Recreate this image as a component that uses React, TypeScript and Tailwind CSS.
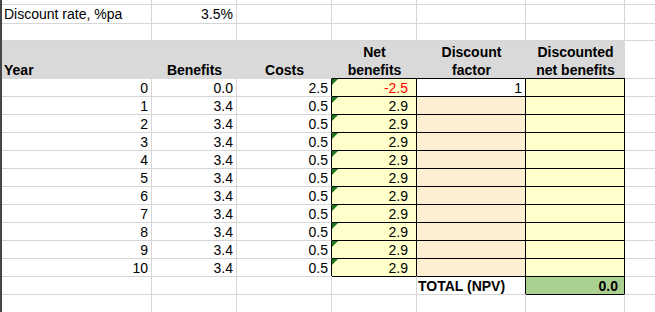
import React from "react";

const GRID = "grid grid-cols-[150px_85px_95px_85px_109px_99px_1fr]";
const G = "border-[#d6d6d6]";

type C = { cls: string; text?: React.ReactNode; tri?: boolean };

function Row({ h, cells }: { h: string; cells: C[] }) {
  return (
    <div className={`${GRID} ${h}`}>
      {cells.map((c, i) => (
        <div key={i} className={`relative leading-[18px] whitespace-nowrap ${c.cls}`}>
          {c.tri && (
            <span className="absolute left-0 top-0 w-0 h-0 border-t-[6px] border-t-[#1f7a1f] border-r-[6px] border-r-transparent" />
          )}
          {c.text}
        </div>
      ))}
    </div>
  );
}

const plainTop = (h: string): C[] =>
  [0, 1, 2, 3, 4, 5, 6].map((i) => ({
    cls: `border-b ${G} ${i < 6 ? "border-r" : ""}`,
  }));

export default function App() {
  const years = Array.from({ length: 11 }, (_, i) => i);
  return (
    <div
      className="w-[655px] h-[312px] overflow-hidden bg-white border-l-2 border-l-[#454545] text-[14px] text-black"
      style={{ fontFamily: '"Liberation Sans", Arial, sans-serif' }}
    >
      <Row h="h-[5px]" cells={plainTop("")} />
      <Row
        h="h-[18px]"
        cells={[
          { cls: `border-b border-r ${G} pl-[2px]`, text: "Discount rate, %pa" },
          { cls: `border-b border-r ${G} text-right pr-[3px]`, text: "3.5%" },
          { cls: `border-b border-r ${G}` },
          { cls: `border-b border-r ${G}` },
          { cls: `border-b border-r ${G}` },
          { cls: `border-b border-r ${G}` },
          { cls: `border-b ${G}` },
        ]}
      />
      <Row h="h-[18px]" cells={plainTop("")} />
      {/* Header */}
      <div className={`${GRID} h-[37px] font-bold leading-[18px]`}>
        <div className="bg-[#d9d9d9] flex flex-col justify-end pl-[2px]">
          <span className="mb-[-1px]">Year</span>
        </div>
        <div className="bg-[#d9d9d9] flex flex-col justify-end items-center">
          <span className="mb-[-1px]">Benefits</span>
        </div>
        <div className="bg-[#d9d9d9] flex flex-col justify-end items-center">
          <span className="mb-[-1px]">Costs</span>
        </div>
        <div className="bg-[#d9d9d9] flex flex-col justify-end items-center mb-[-1px]">
          <span>Net</span>
          <span>benefits</span>
        </div>
        <div className="bg-[#d9d9d9] flex flex-col justify-end items-center mb-[-1px]">
          <span>Discount</span>
          <span>factor</span>
        </div>
        <div className="bg-[#d9d9d9] flex flex-col justify-end items-center mb-[-1px]">
          <span>Discounted</span>
          <span>net benefits</span>
        </div>
        <div />
      </div>
      {years.map((y) => {
        const top0 = y === 0 ? "border-t-[#d9d9d9]" : "border-t-[#d6d6d6]";
        return (
          <Row
            key={y}
            h="h-[18px]"
            cells={[
              { cls: `border-t border-r ${G} ${top0} text-right pr-[3px]`, text: String(y) },
              { cls: `border-t border-r ${G} ${top0} text-right pr-[3px]`, text: y === 0 ? "0.0" : "3.4" },
              { cls: `border-t border-r border-r-black ${G} ${top0} text-right pr-[3px]`, text: y === 0 ? "2.5" : "0.5" },
              {
                cls: `border-t border-r border-black bg-[#ffffcc] text-right pr-[8px] ${y === 0 ? "text-[#ff0000]" : ""}`,
                text: y === 0 ? "-2.5" : "2.9",
                tri: true,
              },
              {
                cls: `border-t border-r border-black text-right pr-[3px] ${y === 0 ? "bg-white" : "bg-[#fdefd2]"}`,
                text: y === 0 ? "1" : "",
              },
              { cls: `border-t border-r border-black bg-[#ffffcc]` },
              { cls: `border-t ${G}` },
            ]}
          />
        );
      })}
      <Row
        h="h-[18px]"
        cells={[
          { cls: `border-t border-r ${G}` },
          { cls: `border-t border-r ${G}` },
          { cls: `border-t border-r ${G}` },
          { cls: `border-t border-t-black border-r border-r-[#d6d6d6]` },
          { cls: `border-t border-r border-black font-bold pl-[1px]`, text: "TOTAL (NPV)" },
          { cls: `border-t border-r border-black bg-[#a9d08e] font-bold text-right pr-[6px]`, text: "0.0" },
          { cls: `border-t ${G}` },
        ]}
      />
      <Row
        h="h-[18px]"
        cells={[
          { cls: `border-t border-r ${G}` },
          { cls: `border-t border-r ${G}` },
          { cls: `border-t border-r ${G}` },
          { cls: `border-t border-r ${G}` },
          { cls: `border-t border-r ${G}` },
          { cls: `border-t border-t-black border-r border-r-[#d6d6d6]` },
          { cls: `border-t ${G}` },
        ]}
      />
    </div>
  );
}
